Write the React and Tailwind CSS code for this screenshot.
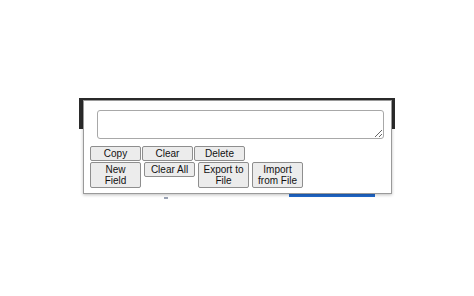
import React from "react";

const btn =
  "w-[51px] px-[4px] py-[1px] text-[10px] leading-[11px] text-[#111] bg-[#ececec] border border-[#8e8e8e] rounded-[2px] text-center";

export default function App() {
  return (
    <div className="relative w-[474px] h-[296px] bg-white overflow-hidden" style={{ fontFamily: "'Liberation Sans', Arial, sans-serif" }}>
      {/* page behind the popup */}
      <div className="pt-[98px] pl-[79px]">
        <div className="w-[316px] h-[31px] bg-[#2b2b2b]" />
        <div className="flex items-start mt-[65px]">
          <div className="ml-[85px] mt-[3px] w-[4px] h-[2px] bg-[#9aa3b5]" />
          <div className="ml-[121px] w-[86px] h-[3px] bg-[#1f68cc]" />
        </div>
      </div>

      {/* popup */}
      <div className="absolute left-[83px] top-[100px] w-[309px] h-[94px] bg-white border border-[#9a9a9a] shadow-[0_1px_3px_rgba(0,0,0,0.25)]">
        <textarea className="block mt-[9px] ml-[13px] w-[287px] h-[29px] border border-[#a8a8a8] rounded-[3px] bg-white" />
        <div className="flex gap-[1px] mt-[7px] ml-[6px]">
          <button className={btn}>Copy</button>
          <button className={btn}>Clear</button>
          <button className={btn}>Delete</button>
        </div>
        <div className="flex items-start gap-[3px] mt-[1px] ml-[6px]">
          <button className={btn}>New Field</button>
          <button className={btn}>Clear All</button>
          <button className={btn}>Export to File</button>
          <button className={btn}>Import from File</button>
        </div>
      </div>
    </div>
  );
}
